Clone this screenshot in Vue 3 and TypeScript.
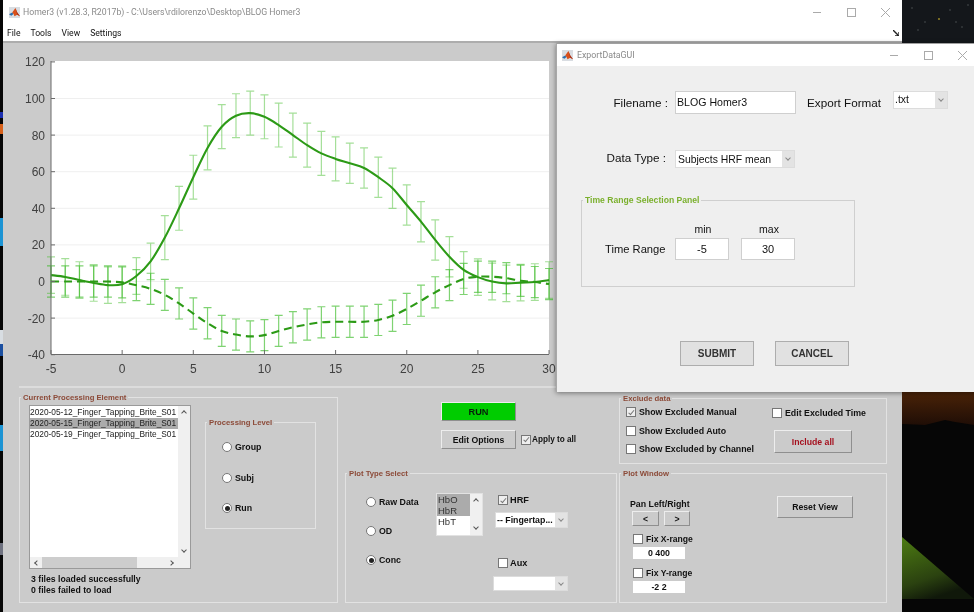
<script setup lang="ts">
const X = (t: number) => 51 + (t + 5) * 14.23
const Y = (v: number) => 281.5 - v * 1.83

const solid = [3.5, 2.5, 0.8, -0.8, -2, -1.5, 3, 11, 24, 40, 57, 73, 84.6, 90.6, 92, 90, 85.5, 80, 74.5, 70, 67, 64.6, 62, 57, 51, 41.8, 32.7, 22.7, 13.5, 6.3, 2.4, 0, -1, -0.6, -0.3, 0.8]
const dashed = [0, 0, 0, 0, 0, -0.5, -2, -4, -7.3, -12, -17.5, -22.8, -27, -29, -30, -29.3, -27, -25, -23.5, -22.3, -22, -22, -22, -21, -18.7, -15, -10.5, -5.9, -2, 1.4, 2.6, 2.6, 1.8, 0.4, -0.3, -1.4]

function curve(vals: number[]): string {
  const p = vals.map((v, i) => [X(i - 5), Y(v)])
  let d = `M${p[0][0]} ${p[0][1]}`
  for (let i = 0; i < p.length - 1; i++) {
    const a = p[Math.max(i - 1, 0)], b = p[i], c = p[i + 1], e = p[Math.min(i + 2, p.length - 1)]
    d += `C${b[0] + (c[0] - a[0]) / 6} ${b[1] + (c[1] - a[1]) / 6} ${c[0] - (e[0] - b[0]) / 6} ${c[1] - (e[1] - b[1]) / 6} ${c[0]} ${c[1]}`
  }
  return d
}

function bars(vals: number[], half: (t: number) => number): string {
  return vals.map((v, i) => {
    const t = i - 5, x = X(t), h = half(t), a = Y(v + h), b = Y(v - h)
    return `M${x} ${a}V${b}M${x - 4} ${a}H${x + 4}M${x - 4} ${b}H${x + 4}`
  }).join('')
}

const solidPath = curve(solid)
const dashedPath = curve(dashed)
const solidBars = bars(solid, t => (t < 3 ? 10 : t < 16 ? 12 : t < 24 ? 11 : 10))
const dashedBars = bars(dashed, () => 8.5)

const yTicks = [120, 100, 80, 60, 40, 20, 0, -20, -40]
const xTicks = [-5, 0, 5, 10, 15, 20, 25, 30]
const files = ['2020-05-12_Finger_Tapping_Brite_S01', '2020-05-15_Finger_Tapping_Brite_S01', '2020-05-19_Finger_Tapping_Brite_S01']
const levels = [{ l: 'Group', on: false }, { l: 'Subj', on: false }, { l: 'Run', on: true }]
const plotTypes = [{ l: 'Raw Data', on: false }, { l: 'OD', on: false }, { l: 'Conc', on: true }]
const excludes = [{ l: 'Show Excluded Manual', on: true }, { l: 'Show Excluded Auto', on: false }, { l: 'Show Excluded by Channel', on: false }]
const stars = [[912, 8], [925, 22], [939, 19], [950, 10], [962, 27], [956, 22], [918, 30], [968, 5]]
</script>

<template>
  <div class="desktop">
    <svg class="wallpaper" viewBox="0 0 974 612" width="974" height="612">
      <defs>
        <linearGradient id="sky" x1="0" y1="0" x2="0" y2="1">
          <stop offset="0" stop-color="#4a2308" />
          <stop offset="1" stop-color="#1e0d06" />
        </linearGradient>
        <linearGradient id="field" x1="0" y1="0" x2="0.4" y2="1">
          <stop offset="0" stop-color="#4d7c12" />
          <stop offset="0.7" stop-color="#2b4210" />
          <stop offset="1" stop-color="#10180a" />
        </linearGradient>
      </defs>
      <rect width="974" height="612" fill="#060606" />
      <rect x="902" width="72" height="44" fill="#14171b" />
      <rect x="902" y="392" width="72" height="34" fill="url(#sky)" />
      <path d="M902 424L925 425L945 420L955 422L974 425V470H902Z" fill="#060606" />
      <path d="M902 537L974 599H902Z" fill="url(#field)" />
      <rect x="0" y="112" width="3" height="6" fill="#1c2fb0" />
      <rect x="0" y="124" width="3" height="10" fill="#d8621c" />
      <rect x="0" y="218" width="3" height="28" fill="#1c94d4" />
      <rect x="0" y="330" width="3" height="14" fill="#d8dde2" />
      <rect x="0" y="344" width="3" height="12" fill="#1b4fa0" />
      <rect x="0" y="425" width="3" height="26" fill="#1c94d4" />
      <rect x="0" y="543" width="3" height="12" fill="#6f7280" />
      <circle v-for="(s, i) in stars" :key="i" :cx="s[0]" :cy="s[1]" r="0.7" fill="#5a5f60" />
      <circle cx="939" cy="19" r="1.1" fill="#8a7a20" />
    </svg>

    <section class="window main">
      <header class="titlebar">
        <svg class="logo" viewBox="0 0 12 12" width="11" height="11">
          <rect width="12" height="12" fill="#d9dde2" />
          <path d="M0 8L3.5 6L5 7.5L2.5 9.5Z" fill="#2a6fb0" />
          <path d="M3.5 6L7 1L9 6L12 10L9 8.5L6 10L5 7.5Z" fill="#d8501a" />
          <path d="M7 1L9 6L12 10L9 8.5Z" fill="#a8301a" />
        </svg>
        <span class="title">Homer3 (v1.28.3, R2017b) - C:\Users\rdilorenzo\Desktop\BLOG Homer3</span>
        <span class="winbtns">
          <span class="wb"><i class="i-min"></i></span>
          <span class="wb"><i class="i-max"></i></span>
          <span class="wb"><i class="i-close"></i></span>
        </span>
      </header>
      <nav class="menu">
        <span>File</span><span>Tools</span><span>View</span><span>Settings</span>
        <svg class="corner" viewBox="0 0 6 6" width="6" height="6"><path d="M0 0L6 6M6 2V6H2" stroke="#222" stroke-width="1.4" fill="none" /></svg>
      </nav>

      <div class="content">
        <svg class="chart" viewBox="3 43 553 343" width="553" height="343">
          <rect x="51" y="61" width="498" height="293.5" fill="#fff" />
          <line v-for="v in yTicks.slice(1, -1)" :key="'g' + v" x1="51" x2="549" :y1="Y(v)" :y2="Y(v)" stroke="#efefef" stroke-width="1" />
          <path :d="solidBars" fill="none" stroke="#4cc034" stroke-opacity="0.5" stroke-width="1.2" />
          <path :d="dashedBars" fill="none" stroke="#30b81c" stroke-opacity="0.62" stroke-width="1.2" />
          <path :d="solidPath" fill="none" stroke="#2c9a16" stroke-width="2.1" />
          <path :d="dashedPath" fill="none" stroke="#2c9a16" stroke-width="2.1" stroke-dasharray="8 5" />
          <path d="M51 61V354.5H549" fill="none" stroke="#6a6a6a" stroke-width="1" />
          <line v-for="v in yTicks" :key="'yt' + v" x1="51" x2="55" :y1="Y(v)" :y2="Y(v)" stroke="#6a6a6a" />
          <line v-for="t in xTicks" :key="'xt' + t" :x1="X(t)" :x2="X(t)" y1="354" y2="350" stroke="#6a6a6a" />
          <text v-for="v in yTicks" :key="'yl' + v" class="tick" x="45" :y="Y(v) + 4.5" text-anchor="end">{{ v }}</text>
          <text v-for="t in xTicks" :key="'xl' + t" class="tick" :x="X(t)" y="372.5" text-anchor="middle">{{ t }}</text>
        </svg>

        <div class="lower">
          <fieldset class="panel element">
            <span class="legend">Current Processing Element</span>
            <div class="element-left">
              <div class="listbox big">
                <div class="rows">
                  <div v-for="(f, i) in files" :key="f" class="row" :class="{ sel: i === 1 }">{{ f }}</div>
                </div>
                <div class="vbar"><i class="chev up"></i><i class="chev down"></i></div>
                <div class="hbar"><i class="chev left"></i><span class="thumb"></span><i class="chev right"></i></div>
              </div>
              <p class="status">3 files loaded successfully<br />0 files failed to load</p>
            </div>
            <fieldset class="panel level">
              <span class="legend">Processing Level</span>
              <div v-for="r in levels" :key="r.l" class="opt"><span class="radio" :class="{ on: r.on }"></span>{{ r.l }}</div>
            </fieldset>
          </fieldset>

          <div class="actions">
            <button class="btn run">RUN</button>
            <div class="edit-row">
              <button class="btn edit">Edit Options</button>
              <span class="opt apply"><span class="box on"></span>Apply to all</span>
            </div>
          </div>

          <fieldset class="panel exclude">
            <span class="legend">Exclude data</span>
            <div class="ex-left">
              <div v-for="c in excludes" :key="c.l" class="opt"><span class="box" :class="{ on: c.on }"></span>{{ c.l }}</div>
            </div>
            <div class="ex-right">
              <div class="opt"><span class="box"></span>Edit Excluded Time</div>
              <button class="btn include">Include all</button>
            </div>
          </fieldset>

          <fieldset class="panel ptype">
            <span class="legend">Plot Type Select</span>
            <div class="pt-radios">
              <div v-for="r in plotTypes" :key="r.l" class="opt"><span class="radio" :class="{ on: r.on }"></span>{{ r.l }}</div>
            </div>
            <div class="listbox small">
              <div class="rows">
                <div class="row sel hb">HbO</div>
                <div class="row sel hb">HbR</div>
                <div class="row hb">HbT</div>
              </div>
              <div class="vbar"><i class="chev up"></i><i class="chev down"></i></div>
            </div>
            <div class="pt-right">
              <div class="opt hrf"><span class="box on"></span>HRF</div>
              <div class="select fingertap"><span class="val">-- Fingertap...</span><span class="arrow"><i class="chev down"></i></span></div>
              <div class="opt aux"><span class="box"></span>Aux</div>
              <div class="select auxsel"><span class="val"></span><span class="arrow"><i class="chev down"></i></span></div>
            </div>
          </fieldset>

          <fieldset class="panel pwin">
            <span class="legend">Plot Window</span>
            <div class="pw-left">
              <div class="opt pan">Pan Left/Right</div>
              <div class="pan-btns"><button class="btn lt">&lt;</button><button class="btn gt">&gt;</button></div>
              <div class="opt fix fx"><span class="box"></span>Fix X-range</div>
              <div class="range">0 400</div>
              <div class="opt fix fy"><span class="box"></span>Fix Y-range</div>
              <div class="range">-2 2</div>
            </div>
            <button class="btn reset">Reset View</button>
          </fieldset>
        </div>
      </div>
    </section>

    <section class="window dialog">
      <header class="titlebar dlgbar">
        <svg class="logo" viewBox="0 0 12 12" width="11" height="11">
          <rect width="12" height="12" fill="#d9dde2" />
          <path d="M0 8L3.5 6L5 7.5L2.5 9.5Z" fill="#2a6fb0" />
          <path d="M3.5 6L7 1L9 6L12 10L9 8.5L6 10L5 7.5Z" fill="#d8501a" />
          <path d="M7 1L9 6L12 10L9 8.5Z" fill="#a8301a" />
        </svg>
        <span class="title dlgtitle">ExportDataGUI</span>
        <span class="winbtns">
          <span class="wb"><i class="i-min"></i></span>
          <span class="wb"><i class="i-max"></i></span>
          <span class="wb"><i class="i-close"></i></span>
        </span>
      </header>
      <div class="dlg-body">
        <div class="d-row first">
          <label class="d-label fn">Filename :</label>
          <div class="d-input name">BLOG Homer3</div>
          <label class="d-label fmt">Export Format</label>
          <div class="select d-sel txt"><span class="val">.txt</span><span class="arrow"><i class="chev down"></i></span></div>
        </div>
        <div class="d-row second">
          <label class="d-label dt">Data Type :</label>
          <div class="select d-sel mean"><span class="val">Subjects HRF mean</span><span class="arrow"><i class="chev down"></i></span></div>
        </div>
        <fieldset class="panel time">
          <span class="legend green">Time Range Selection Panel</span>
          <div class="time-grid">
            <span></span><span class="cap">min</span><span class="cap">max</span>
            <span class="d-label tr">Time Range</span>
            <div class="d-input num">-5</div>
            <div class="d-input num">30</div>
          </div>
        </fieldset>
        <div class="d-actions">
          <button class="d-btn">SUBMIT</button>
          <button class="d-btn">CANCEL</button>
        </div>
      </div>
    </section>
  </div>
</template>

<style>
html, body { margin: 0; background: #060606; }
</style>

<style scoped>
.desktop { position: relative; width: 974px; height: 612px; overflow: hidden; font-family: "Liberation Sans", Arial, sans-serif; color: #111; filter: blur(0.3px); }
.wallpaper { position: absolute; inset: 0; }
.window { position: absolute; box-sizing: border-box; }
.main { left: 3px; top: 0; width: 899px; height: 612px; background: #cbcbcb; display: flex; flex-direction: column; }
.dialog { left: 556px; top: 43px; width: 423px; height: 349px; background: #efefef; border-left: 1px solid #a8a8a8; border-top: 1px solid #a0a0a0; box-shadow: 0 1px 5px rgba(0, 0, 0, .45); display: flex; flex-direction: column; }

.titlebar { height: 24px; background: #fff; display: flex; align-items: center; flex: none; }
.logo { margin-left: 6px; flex: none; }
.title { margin-left: 3px; font-family: Roboto, sans-serif; font-size: 8.7px; color: #8a8a8a; white-space: nowrap; }
.winbtns { margin-left: auto; display: flex; }
.wb { width: 34px; height: 24px; display: flex; align-items: center; justify-content: center; position: relative; }
.i-min { width: 8px; height: 1px; background: #aaa; }
.i-max { width: 7px; height: 7px; border: 1px solid #aaa; }
.i-close { width: 9px; height: 9px; background:
  linear-gradient(45deg, transparent 46%, #aaa 46%, #aaa 54%, transparent 54%),
  linear-gradient(-45deg, transparent 46%, #aaa 46%, #aaa 54%, transparent 54%); }

.menu { height: 17px; background: #fff; border-bottom: 2px solid #adadad; flex: none; display: flex; align-items: center; padding-left: 4px; font-family: Roboto, sans-serif; font-size: 8.6px; color: #111; position: relative; }
.menu span { margin-right: 10px; }
.corner { position: absolute; right: 3px; top: 6px; }

.content { flex: 1; background: #cbcbcb; }
.chart { display: block; }
.tick { font-family: "Liberation Sans", Arial, sans-serif; font-size: 12px; fill: #404040; }

fieldset { margin: 0; padding: 0; min-width: 0; }
.panel { position: relative; border: 1px solid #e2e2e2; box-sizing: border-box; }
.legend { position: absolute; top: -6px; left: 1px; padding: 0 2px; background: #cbcbcb; color: #8c4a38; font-size: 7.7px; font-weight: 700; line-height: 11px; white-space: nowrap; }
.legend.green { background: #efefef; color: #7bb02e; font-size: 8.6px; }

.lower { margin-left: 16px; width: 871px; border-top: 2px solid #dcdcdc; padding-top: 9px; display: grid; column-gap: 0; grid-template-columns: 326px 274px 268px; grid-template-rows: 67px 130px; row-gap: 9px; }
.element { grid-row: 1 / span 2; width: 319px; display: flex; padding: 7px 0 0 9px; }
.element-left { width: 162px; }
.listbox { background: #fff; box-sizing: border-box; position: relative; overflow: hidden; }
.big { width: 162px; height: 164px; border: 1px solid #9a9a9a; }
.rows { overflow: hidden; }
.big .rows { position: absolute; left: 0; top: 1px; width: 149px; }
.row { height: 11px; line-height: 11px; font-size: 8.35px; white-space: nowrap; color: #222; }
.row.sel { background: #ababab; }
.vbar { position: absolute; right: 0; top: 0; bottom: 0; width: 12px; background: #f0f0f0; display: flex; flex-direction: column; justify-content: space-between; align-items: center; padding: 5px 0; box-sizing: border-box; }
.big .vbar { bottom: 11px; }
.hbar { position: absolute; left: 0; right: 0; bottom: 0; height: 11px; background: #f0f0f0; display: flex; align-items: center; }
.thumb { width: 95px; height: 11px; background: #cdcdcd; margin-left: 3px; }
.hbar .chev.left { margin-left: 5px; }
.hbar .chev.right { margin-left: 32px; }
.chev { display: block; width: 4px; height: 4px; border-right: 1px solid #555; border-bottom: 1px solid #555; box-sizing: border-box; }
.chev.down { transform: rotate(45deg); }
.chev.up { transform: rotate(225deg); }
.chev.left { transform: rotate(135deg); }
.chev.right { transform: rotate(-45deg); }
.status { margin: 5px 0 0 2px; font-size: 8.7px; font-weight: 700; line-height: 10.5px; color: #111; white-space: nowrap; }

.opt { display: flex; align-items: center; height: 12px; font-size: 8.8px; font-weight: 700; white-space: nowrap; color: #111; }
.radio { width: 10px; height: 10px; border-radius: 50%; background: #fff; border: 1px solid #777; box-sizing: border-box; margin-right: 3px; flex: none; position: relative; }
.radio.on::after { content: ""; position: absolute; inset: 1.5px; border-radius: 50%; background: #222; }
.box { width: 10px; height: 10px; background: #fff; border: 1px solid #777; box-sizing: border-box; margin-right: 3px; flex: none; position: relative; }
.box.on { background: #eee; }
.box.on::after { content: ""; position: absolute; left: 2.5px; top: 0.5px; width: 3px; height: 5.5px; border-right: 1px solid #777; border-bottom: 1px solid #777; transform: rotate(40deg); box-sizing: border-box; }

.level { width: 111px; height: 107px; margin: 17px 0 0 14px; padding: 18px 0 0 16px; display: flex; flex-direction: column; gap: 18.5px; }

.btn { font-family: inherit; font-weight: 700; font-size: 8.7px; background: #cbcbcb; color: #111; border: 1px solid; border-color: #ededed #8f8f8f #8f8f8f #ededed; padding: 0; box-sizing: border-box; }
.actions { padding: 5px 0 0 96px; }
.run { display: block; width: 75px; height: 19px; background: #00cc00; color: #07200a; font-size: 9.2px; }
.edit-row { display: flex; align-items: center; margin-top: 9px; }
.edit { width: 75px; height: 19px; }
.apply { margin-left: 5px; font-size: 8.2px; }
.apply .box { margin-right: 1px; }

.exclude { display: flex; margin-top: 1px; height: 66px; }
.ex-left { width: 152px; padding: 7px 0 0 6px; box-sizing: border-box; display: flex; flex-direction: column; gap: 6.5px; }
.ex-right { padding-top: 8px; }
.include { display: block; width: 78px; height: 23px; margin: 11px 0 0 2px; color: #a5101e; }

.ptype { width: 272px; display: flex; }
.pt-radios { width: 90px; padding: 22px 0 0 20px; box-sizing: border-box; display: flex; flex-direction: column; gap: 17px; flex: none; }
.small { width: 47px; height: 43px; margin-top: 19px; border: 1px solid #e2e2e2; flex: none; }
.small .rows { width: 33px; padding-top: 0; }
.small .vbar { padding: 5px 0 6px; }
.row.hb { font-size: 9.5px; color: #333; padding-left: 1px; }
.pt-right { margin-left: 10px; width: 76px; }
.hrf { margin: 20px 0 0 5px; font-size: 9.2px; }
.hrf .box, .aux .box { margin-right: 2px; }
.select { display: flex; background: #fff; border: 1px solid #dcdcdc; box-sizing: border-box; }
.select .val { flex: 1; font-size: 8.8px; font-weight: 700; padding-left: 1px; white-space: nowrap; overflow: hidden; display: flex; align-items: center; }
.select .arrow { width: 12px; background: #e3e3e3; display: flex; align-items: center; justify-content: center; flex: none; }
.select .arrow .chev { border-color: #888; margin-top: -2px; }
.fingertap { width: 73px; height: 16px; margin: 6px 0 0 2px; }
.aux { margin: 29px 0 0 5px; font-size: 9.2px; }
.auxsel { width: 75px; height: 15px; margin-top: 7px; }

.pwin { display: flex; }
.pw-left { width: 120px; padding-left: 10px; box-sizing: border-box; flex: none; }
.pan { margin-top: 24px; font-size: 8.8px; }
.pan-btns { display: flex; gap: 5px; margin: 1px 0 0 2px; }
.lt { width: 27px; height: 15px; }
.gt { width: 26px; height: 15px; }
.fix { margin-left: 3px; font-size: 8.6px; }
.fx { margin-top: 7px; }
.fy { margin-top: 8px; }
.range { width: 52px; height: 12px; line-height: 12px; margin: 2px 0 0 3px; background: #fff; text-align: center; font-size: 8.8px; font-weight: 700; }
.reset { width: 76px; height: 22px; margin: 22px 0 0 37px; }

.dlgbar { height: 22px; }
.dlgbar .logo { margin-left: 5px; }
.dlgtitle { margin-left: 4px; font-size: 8.8px; }
.dlg-body { flex: 1; background: #efefef; }
.d-row { display: flex; align-items: flex-start; }
.first { padding-top: 25px; }
.second { padding-top: 36px; }
.d-label { font-size: 11.7px; color: #111; white-space: nowrap; }
.fn { width: 111px; margin-right: 7px; text-align: right; line-height: 23px; }
.fmt { width: 75px; margin: 0 11px 0 11px; line-height: 23px; }
.dt { width: 109px; margin-right: 9px; text-align: right; line-height: 16px; }
.d-input { background: #fff; border: 1px solid #cfcfcf; box-sizing: border-box; font-size: 10.6px; color: #111; }
.name { width: 121px; height: 23px; line-height: 21px; padding-left: 1px; }
.d-sel .val { font-weight: 400; font-size: 10.4px; color: #111; }
.txt { width: 55px; height: 18px; }
.txt .val { font-size: 10.4px; align-items: flex-start; line-height: 16px; }
.mean { width: 120px; height: 18px; }
.mean .val { padding-left: 2px; }
.time { width: 274px; height: 87px; margin: 32px 0 0 24px; border-color: #cfcfcf; }
.time-grid { display: grid; column-gap: 0; grid-template-columns: 93px 66px 55px; grid-template-rows: 14px 22px; row-gap: 2px; padding-top: 21px; }
.cap { font-size: 10.5px; color: #111; text-align: center; line-height: 14px; width: 56px; }
.tr { padding-left: 23px; line-height: 22px; font-size: 11.2px; }
.num { width: 54px; height: 22px; line-height: 20px; text-align: center; font-size: 11px; }
.d-actions { display: flex; gap: 21px; margin: 54px 0 0 123px; }
.d-btn { width: 74px; height: 25px; font-family: inherit; font-weight: 700; font-size: 10px; color: #333; background: #e1e1e1; border: 1px solid #adadad; padding: 0; }
</style>
